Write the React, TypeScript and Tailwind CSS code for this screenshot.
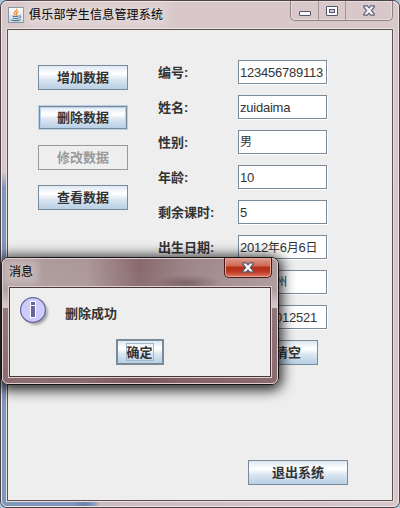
import type { ReactNode } from 'react';
import clsx from 'clsx';

interface Field {
  label: string;
  value: string;
}

const fields: Field[] = [
  { label: '编号:', value: '123456789113' },
  { label: '姓名:', value: 'zuidaima' },
  { label: '性别:', value: '男' },
  { label: '年龄:', value: '10' },
  { label: '剩余课时:', value: '5' },
  { label: '出生日期:', value: '2012年6月6日' },
  { label: '家庭住址:', value: '浙江杭州' },
  { label: '联系电话:', value: '15012012521' },
];

const metal = 'bg-[linear-gradient(180deg,#dde8f3_0%,#ffffff_32%,#ffffff_36%,#dbe6f1_58%,#b8cfe5_100%)]';

function MetalButton({ children, className, focused, disabled }: {
  children: ReactNode;
  className?: string;
  focused?: boolean;
  disabled?: boolean;
}) {
  return (
    <button
      disabled={disabled}
      className={clsx(
        'flex h-[25px] shrink-0 items-center justify-center whitespace-nowrap border text-[13px] leading-none font-bold',
        disabled ? 'border-[#999999] text-[#999999]' : 'text-[#333333]',
        !disabled && !focused && clsx('border-[#7a8a99]', metal),
        focused && 'border-[#b8cfe5]',
        className,
      )}
    >
      {focused ? (
        <span className={clsx('flex h-full w-full items-center justify-center border border-[#7a8a99] shadow-[inset_0_0_0_1px_#b8cfe5]', metal)}>
          {children}
        </span>
      ) : children}
    </button>
  );
}

// Han characters are set a little below the latin size
function FieldText({ value }: { value: string }) {
  return value.split(/([\u4e00-\u9fff]+)/).map((part, i) => (
    <span key={i} className={i % 2 ? 'text-[12px]' : undefined}>{part}</span>
  ));
}

function JavaIcon() {
  return (
    <svg width="16" height="16" viewBox="0 0 16 16" fill="none">
      <defs>
        <linearGradient id="cup" x1="0" y1="0" x2="0" y2="1">
          <stop offset="0" stopColor="#fff" />
          <stop offset="1" stopColor="#c9d6df" />
        </linearGradient>
      </defs>
      <rect x=".5" y=".5" width="15" height="15" fill="url(#cup)" stroke="#8397a8" />
      <path d="M8.8 1.8c1 1.8-3 2.7-2.6 4.4.2.7 1 1.2 1.1 2M10.5 4.5c-1.5.7-2.6 1.3-2 2.3.3.5.3 1-.2 1.5" stroke="#ee8526" strokeWidth="1.2" />
      <path d="M4.5 9c1.5.7 4.8.7 6 0M5 11c1.5.6 4 .6 5.3 0M11 8.8c2.2-.5 2 1.7-.2 2.3M3 12.7c2.5 1.2 7.3 1.2 9.5 0" stroke="#52799a" strokeWidth="1.1" />
    </svg>
  );
}

function CloseGlyph({ stroke }: { stroke: string }) {
  return (
    <svg width="12" height="11" viewBox="0 0 12 11">
      <path d="M.8.8h3.5L6 2.8 7.7.8h3.5v1.3L8.4 5.5l2.8 3.4v1.3H7.7L6 8.2l-1.7 2H.8V8.9l2.8-3.4L.8 2.1z" fill="#f4f4f6" stroke={stroke} strokeWidth="1.2" />
    </svg>
  );
}

function WindowControls() {
  return (
    <div className="flex h-[20px] w-[103px] rounded-b-[5px] border border-t-0 border-[#8f8186] shadow-[inset_0_0_0_1px_#e8dcdf]">
      <div className="flex w-7 items-center justify-center border-r border-[#a4969a] pt-[5px]">
        <svg width="12" height="5" viewBox="0 0 12 5">
          <rect x=".5" y=".5" width="11" height="4" rx=".5" fill="#fafafa" stroke="#55566d" />
        </svg>
      </div>
      <div className="flex w-[27px] items-center justify-center border-r border-[#a4969a]">
        <svg width="12" height="10" viewBox="0 0 12 10">
          <rect x=".5" y=".5" width="11" height="9" rx=".5" fill="#fafafa" stroke="#55566d" />
          <rect x="3.5" y="3.5" width="5" height="3" fill="#d6c9cc" stroke="#55566d" />
        </svg>
      </div>
      <div className="flex flex-1 items-center justify-center pb-px">
        <CloseGlyph stroke="#62627a" />
      </div>
    </div>
  );
}

function InfoIcon() {
  return (
    <svg width="32" height="32" viewBox="0 0 32 32" className="shrink-0">
      <defs>
        <filter id="soft" x="-30%" y="-30%" width="160%" height="160%">
          <feGaussianBlur stdDeviation="1.3" />
        </filter>
      </defs>
      <circle cx="15.5" cy="15.5" r="12.5" fill="#777" opacity=".55" filter="url(#soft)" />
      <circle cx="13" cy="13" r="12.4" fill="#ccccff" stroke="#666699" strokeWidth="1.2" />
      <rect x="10" y="4" width="6" height="17" fill="#fff" />
      <path d="M11 5h4v3h-4zM11 9h4v11h-4z" fill="#666699" />
    </svg>
  );
}

function MessageDialog() {
  return (
    <div className="absolute top-[257px] left-[1px] flex h-[128px] w-[278px] flex-col rounded-[7px] border border-[#191214] bg-[linear-gradient(90deg,#b09d9e_0%,#ab9797_31%,#88686c_50%,#9c8588_67%,#ad999c_100%)] shadow-[0_2px_13px_3px_rgba(0,0,0,0.85)]">
      <div className="flex flex-1 flex-col rounded-[6px] border border-[#dfcfd1] bg-[linear-gradient(180deg,rgba(255,255,255,0)_0%,rgba(255,255,255,0.05)_25%,rgba(255,255,255,0.5)_39%,rgba(110,75,80,0.45)_40%,rgba(115,75,80,0.6)_100%)] px-[5px] pb-[5px]">
        <div className="flex h-[27px] shrink-0 items-start justify-between bg-[radial-gradient(ellipse_34px_8px_at_179px_24px,rgba(70,45,50,0.4),transparent)]">
          <span className="mt-[6px] ml-[1px] bg-white/25 text-[12px] leading-[14px] text-black shadow-[0_0_7px_5px_rgba(255,255,255,0.25)]">消息</span>
          <span className="-mt-px flex h-5 w-[48px] items-center justify-center rounded-b-[5px] border border-t-0 border-[#46191a] bg-[linear-gradient(180deg,#df9d8e_0%,#cd6650_43%,#b52c14_47%,#bd3922_72%,#df785e_100%)] pb-px shadow-[inset_0_0_0_1px_#e5a598]">
            <CloseGlyph stroke="#555466" />
          </span>
        </div>
        <div className="flex flex-1 flex-col border border-[#dfcfd1] bg-[#dfcfd1]">
          <div className="flex flex-1 flex-col border border-[#49373a] bg-[#eeeeee]">
            <div className="flex h-[51px] shrink-0 items-start pt-[9px] pl-[10px]">
              <InfoIcon />
              <span className="pt-[9px] pl-[13px] text-[13px] leading-[16px] font-bold text-[#333333]">删除成功</span>
            </div>
            <div className="flex justify-center pr-px">
              <button className={clsx('flex h-[26px] w-12 items-center justify-center border-2 border-[#7a8a99] text-[13px] leading-none font-bold text-[#333333]', metal)}>
                <span className="flex h-[18px] w-7 items-center justify-center border border-[#a3b8cc] whitespace-nowrap">确定</span>
              </button>
            </div>
          </div>
        </div>
      </div>
    </div>
  );
}

export default function App() {
  return (
    <div className="relative h-[508px] w-[400px] overflow-hidden bg-[#a8c5dc] font-['Liberation_Sans','Noto_Sans_CJK_SC',sans-serif]">
      <div className="flex h-full flex-col rounded-[7px] border border-[#4d4246] bg-[linear-gradient(90deg,#8097bd_0%,#8097bd_18%,#6e83a9_21%,#8097bd_23%,#cdbbbd_25%,#d8c7c9_100%)]">
        <div className="flex flex-1 flex-col rounded-[6px] border border-[#eee5e7] bg-[linear-gradient(180deg,#d8c8ca_0,#d8c8ca_170px,rgba(216,200,202,0)_185px)] px-1 pb-1">
          <div className="flex h-[26px] shrink-0 items-start justify-between">
            <div className="flex items-center gap-[5px] pt-[5px] pl-[2px]">
              <JavaIcon />
              <span className="bg-white/20 text-[12px] leading-[16px] tracking-[0.2px] whitespace-nowrap text-black shadow-[0_0_8px_5px_rgba(255,255,255,0.2)]">俱乐部学生信息管理系统</span>
            </div>
            <div className="-mt-px mr-px">
              <WindowControls />
            </div>
          </div>
          <div className="flex flex-1 flex-col border border-[#e9e0e2] bg-[#e9e0e2]">
            <div className="flex flex-1 flex-col border border-[#5c5055] bg-[#eeeeee] px-[30px]">
              <div className="flex items-start pt-[30px]">
                <div className="flex w-[90px] flex-col gap-[15px] pt-[5px]">
                  <MetalButton>增加数据</MetalButton>
                  <MetalButton focused>删除数据</MetalButton>
                  <MetalButton disabled>修改数据</MetalButton>
                  <MetalButton>查看数据</MetalButton>
                </div>
                <div className="ml-[30px] flex flex-col">
                  {fields.map((f) => (
                    <div key={f.label} className="flex h-[35px] items-start">
                      <span className="w-20 pt-[5px] text-[13px] leading-[16px] font-bold whitespace-nowrap text-[#333333]">{f.label}</span>
                      <div className="flex h-6 w-[89px] items-baseline overflow-hidden border border-[#7a8a99] bg-white pl-[1px] text-[13px] leading-[23px] tracking-[-0.23px] whitespace-nowrap text-[#333333] shadow-[1px_1px_0_#fff]">
                        <FieldText value={f.value} />
                      </div>
                    </div>
                  ))}
                  <MetalButton className="ml-[100px] w-[60px]">清空</MetalButton>
                </div>
              </div>
              <MetalButton className="mt-[95px] ml-[210px] w-[100px]">退出系统</MetalButton>
            </div>
          </div>
        </div>
      </div>
      <MessageDialog />
    </div>
  );
}
